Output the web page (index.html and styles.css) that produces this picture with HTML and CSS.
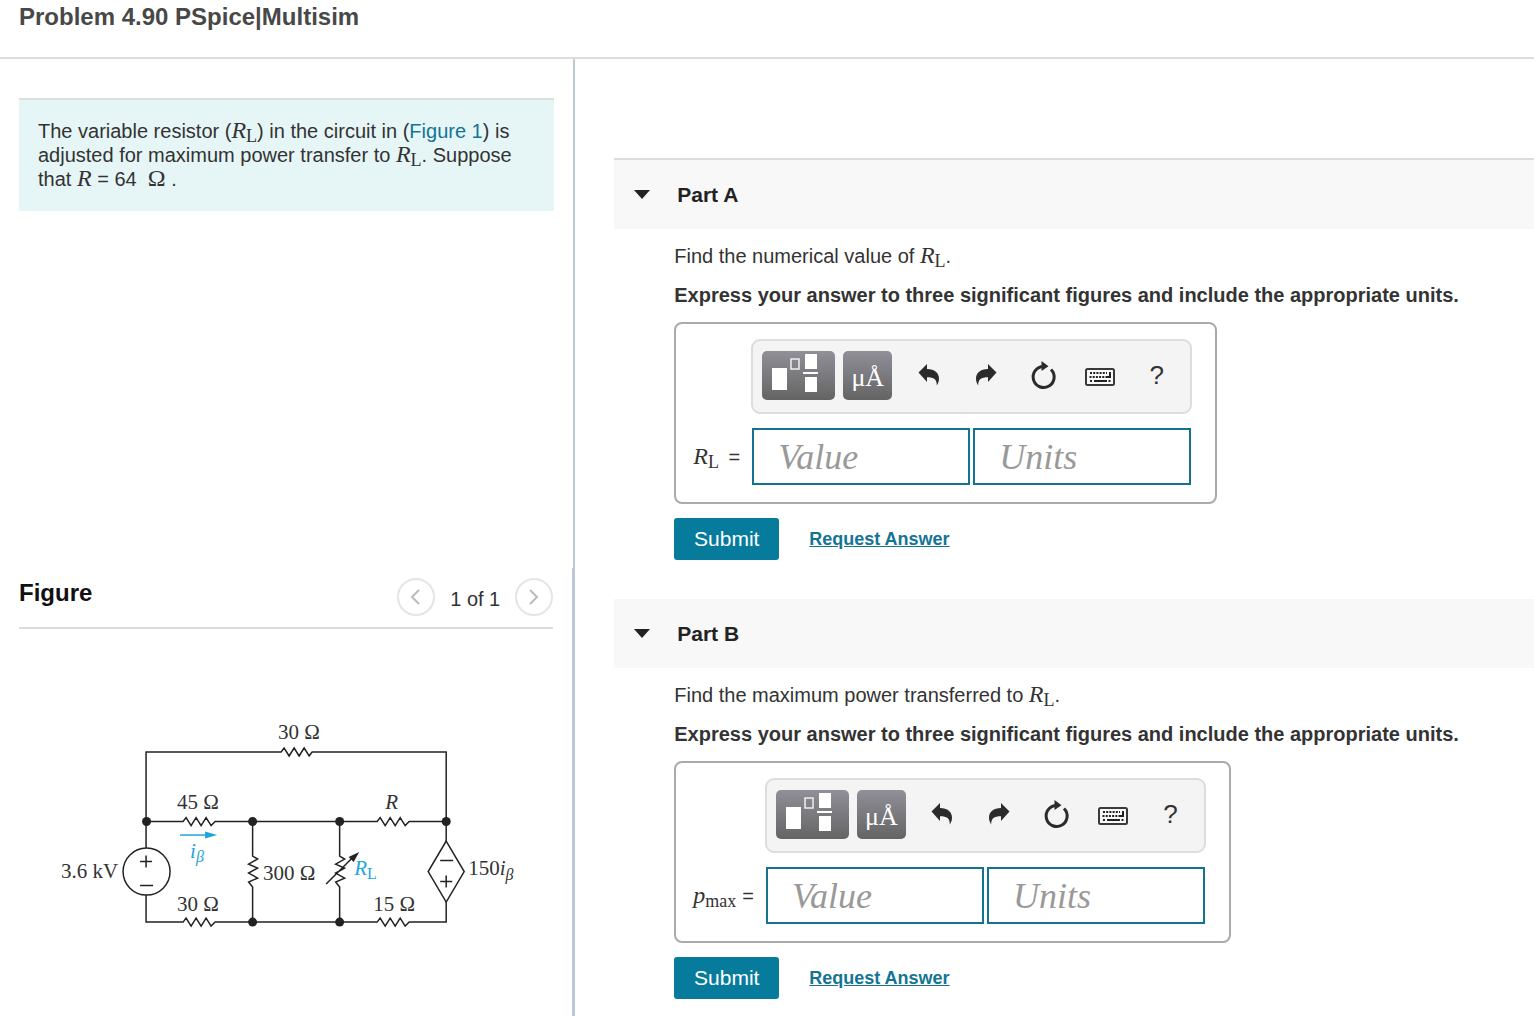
FILE: index.html
```html
<!DOCTYPE html>
<html lang="en">
<head>
  <meta charset="utf-8">
  <title>Problem 4.90 PSpice|Multisim</title>
  <link rel="stylesheet" href="styles.css">
</head>
<body>
  <!-- shared icons -->
  <svg class="sprite" aria-hidden="true">
    <symbol id="templates" viewBox="0 0 73 49">
      <path d="M10 17h15v22H10zM43 3h12v15H43zM41 21h15v2H41zM43 26h12v15H43z" fill="#fff"/>
      <rect x="29" y="8" width="8" height="10" fill="none" stroke="#eee" stroke-width="1.5"/>
    </symbol>
    <symbol id="undo" viewBox="0 0 22 26">
      <path d="M0.500 9.500 9 1v5c7.500.2 12 3.800 12 9.500 0 2.600-.8 4.800-2.200 7 .2-6-2.800-8.200-9.800-8.200v4.700z" fill="#2b2b2b"/>
    </symbol>
    <symbol id="redo" viewBox="0 0 22 26">
      <path d="M21.500 9.500 13 1v5C5.500 6.200 1 9.800 1 15.500c0 2.600.8 4.800 2.200 7-.2-6 2.800-8.200 9.800-8.200v4.700z" fill="#2b2b2b"/>
    </symbol>
    <symbol id="reset" viewBox="0 0 28 30">
      <path d="M14.500 5.500A10.500 10.500 0 1 0 22 8.500" fill="none" stroke="#2b2b2b" stroke-width="3"/>
      <path d="M12.500 0 19.500 5.300 12.500 10z" fill="#2b2b2b"/>
    </symbol>
    <symbol id="keyboard" viewBox="0 0 30 23">
      <rect x="1" y="5" width="28" height="16" rx="1.500" fill="#f9f9f9" stroke="#3a3a3a" stroke-width="2"/>
      <path d="M5 9h17M4.500 13h19M5 17h2M23.500 17h2" stroke="#222" stroke-width="2" stroke-dasharray="2 1.200"/>
      <path d="M9 17h13M25 8v5h-3" fill="none" stroke="#222" stroke-width="2"/>
    </symbol>
  </svg>

  <header class="page-header">
    <h1>Problem 4.90 PSpice|Multisim</h1>
  </header>

  <div class="layout">
    <aside class="left">
      <div class="intro-pane">
        <div class="intro">
          <p>The variable resistor (<span class="math"><i>R</i><sub>L</sub></span>) in the circuit in (<a href="#figure">Figure 1</a>) is adjusted for maximum power transfer to <span class="math"><i>R</i><sub>L</sub></span>. Suppose that <span class="math"><i>R</i></span> = 64 &nbsp;<span class="math">Ω</span> .</p>
        </div>
      </div>

      <section class="figure" id="figure">
        <div class="figure-header">
          <h2>Figure</h2>
          <div class="pager">
            <button type="button" aria-label="Previous figure">
              <svg width="12" height="18" viewBox="0 0 12 18"><path d="M9 2 2 9l7 7" fill="none" stroke="#bbb" stroke-width="2"/></svg>
            </button>
            <span>1 of 1</span>
            <button type="button" aria-label="Next figure">
              <svg width="12" height="18" viewBox="0 0 12 18"><path d="M2 2l7 7-7 7" fill="none" stroke="#bbb" stroke-width="2"/></svg>
            </button>
          </div>
        </div>

        <svg class="circuit" viewBox="19 710 534 230" role="img" aria-label="Circuit with the variable resistor">
          <g class="wire">
            <!-- top branch -->
            <path d="M146 848V752H281l3-4 5 8 5-8 5 8 5-8 5 8 3-4H446V842"/>
            <!-- middle branch -->
            <path d="M146 821.500H183l3-4 5 8 5-8 5 8 5-8 5 8 4-4H377l3-4 5 8 5-8 5 8 5-8 5 8 4-4H446"/>
            <!-- bottom branch -->
            <path d="M146 895V922H183l3-4 5 8 5-8 5 8 5-8 5 8 4-4H377l3-4 5 8 5-8 5 8 5-8 5 8 4-4H446V902"/>
            <!-- vertical resistors -->
            <path d="M252.500 821V856l5 3-9 5 9 4-9 5 9 5-9 4 4 5V922"/>
            <path d="M339.500 821V856l5 3-9 5 9 4-9 5 9 5-9 4 4 5V922M326 884 353 857"/>
            <!-- sources -->
            <circle cx="146.500" cy="871.500" r="23.500"/>
            <path d="M446 841 464 871.500 446 902 428 871.500z"/>
            <path d="M140 861.500h12M146 855.500v12M140 885.500h13M440 860.500h13M440 881.500h12M446 875.500v12"/>
          </g>
          <path d="M359 852 348.500 857 353.500 862z" fill="#222"/>
          <g fill="#222">
            <circle cx="146.500" cy="821.500" r="4.500"/>
            <circle cx="252.500" cy="821.500" r="4.500"/>
            <circle cx="339.500" cy="821.500" r="4.500"/>
            <circle cx="446" cy="821.500" r="4.500"/>
            <circle cx="252.500" cy="922" r="4.500"/>
            <circle cx="339.500" cy="922" r="4.500"/>
          </g>
          <path d="M180 835H206" stroke="#1fa5de" stroke-width="1.500"/>
          <path d="M205 831.500 217 835 205 838.500z" fill="#1fa5de"/>
          <g class="labels">
            <text x="278" y="739">30 Ω</text>
            <text x="177" y="809">45 Ω</text>
            <text x="385" y="809" class="it">R</text>
            <text x="61" y="878">3.6 kV</text>
            <text x="263" y="880">300 Ω</text>
            <text x="177" y="911">30 Ω</text>
            <text x="373" y="911">15 Ω</text>
            <text x="468" y="875">150<tspan class="it">i</tspan><tspan class="it small" dy="5">β</tspan></text>
            <text x="190" y="858" class="it blue">i<tspan class="small" dy="4">β</tspan></text>
            <text x="354" y="875" class="blue"><tspan class="it">R</tspan><tspan class="small" dy="4">L</tspan></text>
          </g>
        </svg>
      </section>
    </aside>

    <main class="parts">
      <section class="part">
        <h2 class="part-header first"><span class="caret"></span>Part A</h2>
        <form class="part-body">
          <p>Find the numerical value of <span class="math"><i>R</i><sub>L</sub></span>.</p>
          <p class="instructions">Express your answer to three significant figures and include the appropriate units.</p>
          <div class="answer-box">
            <div class="toolbar">
              <button type="button" class="dark wide" aria-label="Templates"><svg width="73" height="49"><use href="#templates"/></svg></button>
              <button type="button" class="dark">μÅ</button>
              <button type="button" class="tool" aria-label="Undo"><svg width="22" height="26"><use href="#undo"/></svg></button>
              <button type="button" class="tool" aria-label="Redo"><svg width="22" height="26"><use href="#redo"/></svg></button>
              <button type="button" class="tool" aria-label="Reset"><svg width="28" height="30"><use href="#reset"/></svg></button>
              <button type="button" class="tool" aria-label="Keyboard shortcuts"><svg width="30" height="23"><use href="#keyboard"/></svg></button>
              <button type="button" class="tool">?</button>
            </div>
            <label for="value-a"><span class="math"><i>R</i><sub>L</sub></span> =</label>
            <div class="fields">
              <input type="text" id="value-a" placeholder="Value">
              <input type="text" aria-label="Units of part A" placeholder="Units">
            </div>
          </div>
          <div class="actions">
            <button type="submit" class="submit">Submit</button>
            <a href="#">Request Answer</a>
          </div>
        </form>
      </section>

      <section class="part">
        <h2 class="part-header"><span class="caret"></span>Part B</h2>
        <form class="part-body">
          <p>Find the maximum power transferred to <span class="math"><i>R</i><sub>L</sub></span>.</p>
          <p class="instructions">Express your answer to three significant figures and include the appropriate units.</p>
          <div class="answer-box">
            <div class="toolbar">
              <button type="button" class="dark wide" aria-label="Templates"><svg width="73" height="49"><use href="#templates"/></svg></button>
              <button type="button" class="dark">μÅ</button>
              <button type="button" class="tool" aria-label="Undo"><svg width="22" height="26"><use href="#undo"/></svg></button>
              <button type="button" class="tool" aria-label="Redo"><svg width="22" height="26"><use href="#redo"/></svg></button>
              <button type="button" class="tool" aria-label="Reset"><svg width="28" height="30"><use href="#reset"/></svg></button>
              <button type="button" class="tool" aria-label="Keyboard shortcuts"><svg width="30" height="23"><use href="#keyboard"/></svg></button>
              <button type="button" class="tool">?</button>
            </div>
            <label for="value-b"><span class="math"><i>p</i><sub>max</sub></span> =</label>
            <div class="fields">
              <input type="text" id="value-b" placeholder="Value">
              <input type="text" aria-label="Units of part B" placeholder="Units">
            </div>
          </div>
          <div class="actions">
            <button type="submit" class="submit">Submit</button>
            <a href="#">Request Answer</a>
          </div>
        </form>
      </section>
    </main>
  </div>
</body>
</html>
```
FILE: styles.css
```css
* {
  box-sizing: border-box;
}

body {
  margin: 0;
  display: flex;
  flex-direction: column;
  min-height: 100vh;
  font-family: "Liberation Sans", Arial, sans-serif;
  font-size: 20px;
  line-height: 24px;
  color: #333;
  background-color: #fff;
}

h1, h2, p {
  margin: 0;
}

button {
  font-family: inherit;
  padding: 0;
  border: none;
  cursor: pointer;
}

a {
  color: #147494;
}

.sprite {
  display: none;
}

.page-header {
  padding: 3px 19px 26px;
  border-bottom: 2px solid #ddd;
}

.page-header h1 {
  font-size: 24px;
  line-height: 28px;
  color: #484848;
}

.layout {
  flex: 1;
  display: grid;
  grid-template-columns: 3fr 5fr;
}

/* math */
.math {
  font-family: "Liberation Serif", "Times New Roman", serif;
  font-size: 24px;
  line-height: 0;
}

.math sub {
  font-size: 18px;
  line-height: 0;
  vertical-align: -4px;
}

/* left column */
.left {
  display: flex;
  flex-direction: column;
}

.intro-pane {
  flex: 1;
  padding: 39px 19px 0;
  border-right: 2px solid #bcc8d6;
}

.intro {
  padding: 19px 19px 20px;
  border-top: 2px solid #d9e0e0;
  background-color: #e6f6f7;
}

.intro a {
  text-decoration: none;
}

.figure {
  padding: 10px 19px 76px;
  border-right: 3px solid #bcc8d6;
}

.figure-header {
  display: flex;
  justify-content: space-between;
  height: 51px;
  border-bottom: 2px solid #ddd;
}

.figure-header h2 {
  font-size: 24px;
  line-height: 30px;
  color: #111;
}

.pager {
  display: flex;
  gap: 15px;
}

.pager span {
  line-height: 42px;
}

.pager button {
  display: flex;
  align-items: center;
  justify-content: center;
  width: 38px;
  height: 38px;
  border: 2px solid #e5e5e5;
  border-radius: 50%;
  background-color: #fff;
}

.circuit {
  display: block;
  width: 100%;
  margin-top: 81px;
}

.wire {
  fill: none;
  stroke: #222;
  stroke-width: 1.5;
}

.labels {
  font-family: "Liberation Serif", "Times New Roman", serif;
  font-size: 21px;
  fill: #333;
}

.labels .it {
  font-style: italic;
}

.labels .small {
  font-size: 16px;
}

.labels .blue {
  fill: #1fa5de;
}

/* parts */
.parts {
  padding: 99px 0 17px 39px;
}

.part + .part {
  margin-top: 39px;
}

.part-header {
  display: flex;
  align-items: center;
  gap: 27px;
  height: 69px;
  padding-left: 20px;
  font-size: 21px;
  color: #222;
  background-color: #f8f8f8;
}

.part-header.first {
  height: 71px;
  border-top: 2px solid #ddd;
}

.caret {
  border: 8px solid transparent;
  border-top: 9px solid #222;
  border-bottom: none;
}

.part-body {
  padding: 15px 0 0 60px;
}

.instructions {
  margin: 15px 0;
  font-weight: bold;
}

.answer-box {
  display: grid;
  grid-template-columns: minmax(47px, auto) 441px;
  gap: 14px 11px;
  width: fit-content;
  padding: 15px 23px 17px 17px;
  border: 2px solid #aaa;
  border-radius: 8px;
}

.answer-box label {
  display: flex;
  align-items: baseline;
  justify-content: space-between;
  gap: 6px;
  align-self: center;
}

.toolbar {
  grid-column: 2;
  display: flex;
  height: 75px;
  padding: 10px 9px;
  border: 2px solid #ddd;
  border-radius: 9px;
  background-color: #f4f4f4;
}

.toolbar button {
  flex: none;
}

.dark {
  width: 49px;
  height: 49px;
  margin-right: 8px;
  padding-top: 4px;
  border-radius: 5px;
  background: linear-gradient(#918f98, #646464);
  color: #fff;
  font-family: "Liberation Serif", "Times New Roman", serif;
  font-size: 26px;
}

.dark.wide {
  width: 73px;
  padding: 0;
}

.dark svg {
  display: block;
}

.tool {
  display: flex;
  align-items: center;
  justify-content: center;
  width: 57px;
  height: 49px;
  background: none;
  color: #333;
  font-size: 26px;
}

.fields {
  display: flex;
  gap: 3px;
  padding: 0 1px;
}

.fields input {
  flex: 1;
  min-width: 0;
  height: 57px;
  padding: 0 24px;
  border: 2px solid #147490;
  background-color: #fff;
  font-family: "Liberation Serif", "Times New Roman", serif;
  font-size: 36px;
}

.fields input::placeholder {
  color: #999;
  font-style: italic;
}

.actions {
  display: flex;
  align-items: center;
  gap: 30px;
  margin-top: 14px;
}

.submit {
  width: 105px;
  height: 42px;
  border-radius: 3px;
  background-color: #077b9c;
  color: #fff;
  font-size: 21px;
}

.actions a {
  font-size: 18px;
  font-weight: bold;
}
```
